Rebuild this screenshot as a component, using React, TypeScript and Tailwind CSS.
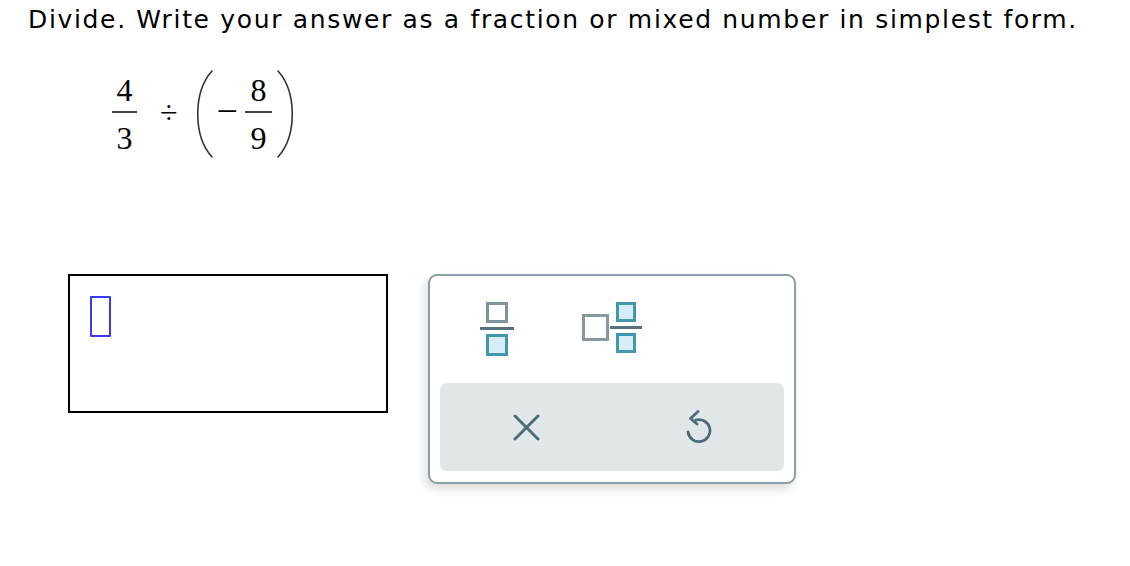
import React from 'react';

function Paren({ side }: { side: 'left' | 'right' }) {
  const d = side === 'left' ? 'M17 1 C-2 22 -2 66 17 87' : 'M1 1 C20 22 20 66 1 87';
  return (
    <svg width="18" height="88" viewBox="0 0 18 88" className="overflow-visible">
      <path d={d} fill="none" stroke="#333" strokeWidth="1.6" strokeLinecap="round" />
    </svg>
  );
}

function Fraction({ top, bottom, width }: { top: string; bottom: string; width: string }) {
  return (
    <div className={`flex flex-col items-center ${width}`}>
      <span className="h-[32px] leading-[32px]">{top}</span>
      <div className="mt-[5px] h-[2px] w-full bg-[#444]" />
      <span className="mt-[9px] h-[32px] leading-[32px]">{bottom}</span>
    </div>
  );
}

function FractionIcon() {
  return (
    <div className="flex flex-col items-center">
      <div className="h-[21px] w-[22px] border-[3px] border-[#7c949c]" />
      <div className="mt-[4px] h-[3px] w-[34px] bg-[#56727d]" />
      <div className="mt-[4px] h-[22px] w-[22px] border-[3px] border-[#3f97b0] bg-[#d5edf3]" />
    </div>
  );
}

function MixedIcon() {
  return (
    <div className="flex items-center gap-[1px]">
      <div className="h-[27px] w-[27px] border-[3px] border-[#85999f]" />
      <div className="flex flex-col items-center">
        <div className="h-[20px] w-[20px] border-[3px] border-[#3f97b0] bg-[#d5edf3]" />
        <div className="mt-[4px] h-[3px] w-[32px] bg-[#56727d]" />
        <div className="mt-[4px] h-[20px] w-[20px] border-[3px] border-[#3f97b0] bg-[#d5edf3]" />
      </div>
    </div>
  );
}

export default function App() {
  return (
    <div className="min-h-screen w-full bg-white text-black">
      {/* Question */}
      <div className="pl-[28px] pt-[6px] text-[25px] leading-[28px] tracking-[1.66px] whitespace-nowrap [font-family:'DejaVu_Sans',sans-serif]">
        Divide. Write your answer as a fraction or mixed number in simplest form.
      </div>

      {/* Expression */}
      <div className="ml-[112px] mt-[36px] flex items-center text-[32px] [font-family:'Liberation_Serif',serif]">
        <Fraction top="4" bottom="3" width="w-[25px]" />
        <span className="ml-[23px] mb-[5px] h-[32px] leading-[32px]">÷</span>
        <div className="ml-[17px]">
          <Paren side="left" />
        </div>
        <span className="ml-[4px] mb-[7px] h-[30px] leading-[30px] text-[38px]">−</span>
        <div className="ml-[7px]">
          <Fraction top="8" bottom="9" width="w-[27px]" />
        </div>
        <div className="ml-[5px]">
          <Paren side="right" />
        </div>
      </div>

      {/* Answer + keypad */}
      <div className="ml-[68px] mt-[116px] flex items-start gap-[40px]">
        <div className="h-[139px] w-[320px] border-2 border-black p-[20px]">
          <div className="h-[41px] w-[21px] rounded-[1px] border-2 border-[#3a3af5]" />
        </div>

        <div className="flex h-[210px] w-[368px] flex-col rounded-[9px] border-2 border-[#8b9ea5] bg-white p-[10px] shadow-[-3px_5px_10px_rgba(0,0,0,0.14)]">
          <div className="grid h-[97px] grid-cols-3 items-start pt-[16px]">
            <div className="flex justify-center">
              <FractionIcon />
            </div>
            <div className="flex justify-center">
              <MixedIcon />
            </div>
            <div />
          </div>
          <div className="grid h-[88px] grid-cols-2 items-center rounded-[7px] bg-[#e1e6e9]">
            <div className="flex justify-center">
              <svg width="27" height="27" viewBox="0 0 27 27">
                <path d="M2 2 L25 25 M25 2 L2 25" stroke="#4b6c79" strokeWidth="3" strokeLinecap="round" />
              </svg>
            </div>
            <div className="flex justify-center pl-[2px]">
              <svg width="26" height="34" viewBox="0 0 26 34">
                <path d="M12 1.5 L4.5 8.5 L11 14" fill="none" stroke="#4b6c79" strokeWidth="2.8" strokeLinecap="round" strokeLinejoin="round" />
                <path d="M9.6 10.2 A11 11 0 1 1 2.05 22" fill="none" stroke="#4b6c79" strokeWidth="2.8" strokeLinecap="round" />
              </svg>
            </div>
          </div>
        </div>
      </div>
    </div>
  );
}
